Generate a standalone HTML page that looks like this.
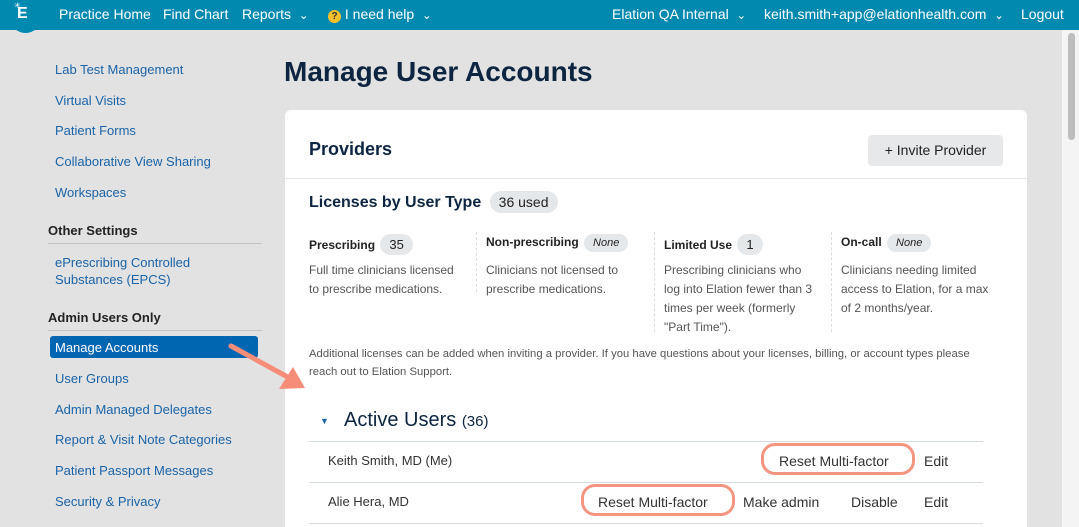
<!DOCTYPE html>
<html><head><style>
*{margin:0;padding:0;box-sizing:border-box}
html,body{width:1079px;height:527px;overflow:hidden}
body{background:#e2e2e2;font-family:"Liberation Sans",sans-serif;position:relative}
.top{position:absolute;left:0;top:0;width:1079px;height:30px;background:#0289b0;color:#fff;font-size:14px}
.top span{position:absolute;top:6px;white-space:nowrap}
.logo{position:absolute;left:10px;top:-4px;width:31px;height:37px;border-radius:0 0 16px 16px;background:#0289b0}
.nav a{position:absolute;left:55px;color:#1a64a8;font-size:13px;text-decoration:none;white-space:nowrap}
.hd{position:absolute;left:48px;width:214px;font-weight:bold;font-size:13px;color:#222;border-bottom:1px solid #c4c4c4;padding-bottom:5px}
.card{position:absolute;left:285px;top:110px;width:742px;height:430px;background:#fff;border-radius:6px}
.t{position:absolute;white-space:nowrap}
.pill{display:inline-block;background:#e4e8ea;border-radius:12px;padding:3px 9px;font-size:14px;color:#222;font-weight:normal}
.desc{font-size:12px;color:#555;line-height:19px}
.ol{position:absolute;border:3px solid #f39580;border-radius:14px}
.act{font-size:14px;color:#333}
</style></head><body>
<div class="top">
<div class="logo"></div>
<span style="left:17px;top:5px;font-weight:bold;font-size:16px">E</span>
<span style="left:14px;top:1px;font-size:8px">✳</span>
<span style="left:59px">Practice Home</span>
<span style="left:163px">Find Chart</span>
<span style="left:242px">Reports&nbsp;&nbsp;<small>⌄</small></span>
<span style="left:328px"><b style="display:inline-block;width:13px;height:13px;border-radius:50%;background:#f5c12a;color:#333;font-size:10px;text-align:center;line-height:13px">?</b> I need help&nbsp;&nbsp;<small>⌄</small></span>
<span style="left:612px">Elation QA Internal&nbsp;&nbsp;<small>⌄</small></span>
<span style="left:764px">keith.smith+app@elationhealth.com&nbsp;&nbsp;<small>⌄</small></span>
<span style="left:1021px">Logout</span>
</div>
<div class="nav">
<a style="top:62px">Lab Test Management</a>
<a style="top:93px">Virtual Visits</a>
<a style="top:123px">Patient Forms</a>
<a style="top:154px">Collaborative View Sharing</a>
<a style="top:185px">Workspaces</a>
<div class="hd" style="top:223px">Other Settings</div>
<a style="top:254px;line-height:17px">ePrescribing Controlled<br>Substances (EPCS)</a>
<div class="hd" style="top:310px">Admin Users Only</div>
<div style="position:absolute;left:50px;top:336px;width:208px;height:22px;background:#0066b2;border-radius:3px"></div>
<a style="top:340px;color:#fff">Manage Accounts</a>
<a style="top:371px">User Groups</a>
<a style="top:402px">Admin Managed Delegates</a>
<a style="top:432px">Report &amp; Visit Note Categories</a>
<a style="top:463px">Patient Passport Messages</a>
<a style="top:494px">Security &amp; Privacy</a>
</div>
<div class="t" style="left:284px;top:56px;font-size:28px;font-weight:bold;color:#0d2540">Manage User Accounts</div>
<div class="card">
<div class="t" style="left:24px;top:29px;font-size:18px;font-weight:bold;color:#0d2540">Providers</div>
<div class="t" style="left:583px;top:25px;width:135px;height:31px;background:#e6e8ea;border-radius:4px;font-size:14px;color:#222;text-align:center;line-height:31px">+ Invite Provider</div>
<div style="position:absolute;left:0;top:68px;width:742px;border-top:1px solid #e2e8ea"></div>
<div class="t" style="left:24px;top:81px;font-size:16px;color:#0d2540;font-weight:bold">Licenses by User Type <span class="pill" style="margin-left:4px">36 used</span></div>
<div class="t" style="left:24px;top:124px;font-size:12px;color:#222;font-weight:bold">Prescribing <span class="pill" style="font-size:13px;margin-left:2px">35</span></div>
<div class="t desc" style="left:24px;top:151px">Full time clinicians licensed<br>to prescribe medications.</div>
<div style="position:absolute;left:191px;top:122px;height:60px;border-left:1px dashed #ddd"></div>
<div class="t" style="left:201px;top:124px;font-size:12px;color:#222;font-weight:bold">Non-prescribing <span class="pill" style="font-size:11px;font-style:italic;margin-left:2px">None</span></div>
<div class="t desc" style="left:201px;top:151px">Clinicians not licensed to<br>prescribe medications.</div>
<div style="position:absolute;left:369px;top:122px;height:100px;border-left:1px dashed #ddd"></div>
<div class="t" style="left:379px;top:124px;font-size:12px;color:#222;font-weight:bold">Limited Use <span class="pill" style="font-size:13px;margin-left:2px">1</span></div>
<div class="t desc" style="left:379px;top:151px">Prescribing clinicians who<br>log into Elation fewer than 3<br>times per week (formerly<br>"Part Time").</div>
<div style="position:absolute;left:546px;top:122px;height:100px;border-left:1px dashed #ddd"></div>
<div class="t" style="left:556px;top:124px;font-size:12px;color:#222;font-weight:bold">On-call <span class="pill" style="font-size:11px;font-style:italic;margin-left:2px">None</span></div>
<div class="t desc" style="left:556px;top:151px">Clinicians needing limited<br>access to Elation, for a max<br>of 2 months/year.</div>
<div class="t" style="left:24px;top:235px;font-size:11.3px;color:#555;line-height:18px">Additional licenses can be added when inviting a provider. If you have questions about your licenses, billing, or account types please<br>reach out to Elation Support.</div>
<div class="t" style="left:35px;top:306px;font-size:9px;color:#1a64a8">▼</div>
<div class="t" style="left:59px;top:299px;font-size:20px;color:#0d2540">Active Users <span style="font-size:15px">(36)</span></div>
<div style="position:absolute;left:24px;top:331px;width:674px;border-top:1px solid #d5dde0"></div>
<div class="t" style="left:43px;top:343px;font-size:13px;color:#333">Keith Smith, MD (Me)</div>
<div class="t act" style="left:494px;top:343px">Reset Multi-factor</div>
<div class="t act" style="left:639px;top:343px">Edit</div>
<div class="ol" style="left:476px;top:333px;width:154px;height:32px"></div>
<div style="position:absolute;left:24px;top:372px;width:674px;border-top:1px solid #d5dde0"></div>
<div class="t" style="left:43px;top:384px;font-size:13px;color:#333">Alie Hera, MD</div>
<div class="t act" style="left:313px;top:384px">Reset Multi-factor</div>
<div class="t act" style="left:458px;top:384px">Make admin</div>
<div class="t act" style="left:566px;top:384px">Disable</div>
<div class="t act" style="left:639px;top:384px">Edit</div>
<div class="ol" style="left:296px;top:374px;width:154px;height:32px"></div>
<div style="position:absolute;left:24px;top:413px;width:674px;border-top:1px solid #d5dde0"></div>
</div>
<svg style="position:absolute;left:225px;top:340px" width="85" height="55"><line x1="6" y1="6" x2="68" y2="40" stroke="#f58d78" stroke-width="5" stroke-linecap="round"/><polygon points="80,48 54,49 68,27" fill="#f58d78"/></svg>
<div style="position:absolute;left:1062px;top:30px;width:17px;height:497px;background:#f4f4f4"></div>
<div style="position:absolute;left:1068px;top:33px;width:7px;height:107px;background:#bdbdbd;border-radius:4px"></div>
</body></html>
